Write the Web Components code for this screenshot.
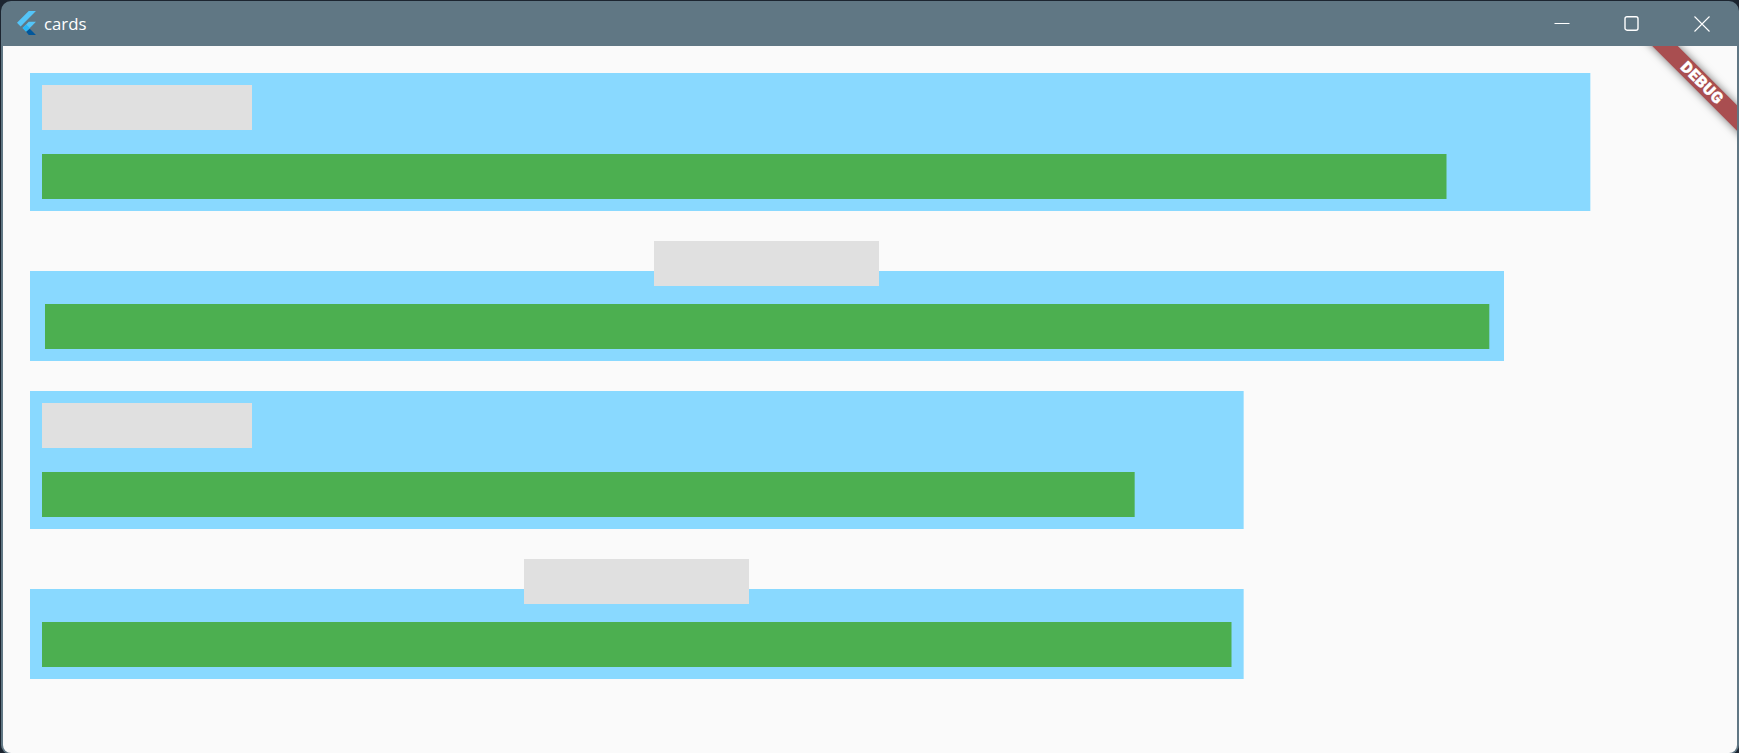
<!DOCTYPE html>
<html>
<head>
<meta charset="utf-8">
<title>cards</title>
<style>
  html, body {
    margin: 0;
    height: 100%;
    overflow: hidden;
    background: #1c2530;
  }
</style>
</head>
<body>
<app-window>
  <title-bar slot="bar">cards</title-bar>
  <card-demo style="width: 1560px" edge="rgba(137,217,255,.35)">
    <grey-chip slot="head" style="width: 210px"></grey-chip>
    <green-bar style="width: 1404px" edge="rgba(76,175,80,.5)"></green-bar>
  </card-demo>
  <card-demo overlap inset="15" style="width: 1474px">
    <grey-chip slot="head" style="width: 225px; margin-left: -1px"></grey-chip>
    <green-bar edge="rgba(76,175,80,.3)"></green-bar>
  </card-demo>
  <card-demo style="width: 1213px" edge="rgba(137,217,255,.67)">
    <grey-chip slot="head" style="width: 210px"></grey-chip>
    <green-bar style="width: 1092px" edge="rgba(76,175,80,.67)"></green-bar>
  </card-demo>
  <card-demo overlap style="width: 1213px" edge="rgba(137,217,255,.67)">
    <grey-chip slot="head" style="width: 225px"></grey-chip>
    <green-bar edge="rgba(76,175,80,.5)"></green-bar>
  </card-demo>
  <debug-banner slot="overlay"></debug-banner>
</app-window>

<script>
(() => {
  class AppWindow extends HTMLElement {
    constructor() {
      super();
      this.attachShadow({ mode: 'open' });
      this.shadowRoot.innerHTML = `
        <style>
          *, *::after, *::before {
            box-sizing: border-box;
          }

          :host {
            display: flex;
            flex-direction: column;
            height: 752px;
            margin: 1px 0 0 1px;
            padding: 0 2px 1px 2px;
            border-radius: 10px 10px 9px 9px;
            background: #607784;
            overflow: hidden;
          }

          .content {
            flex: 1;
            display: flex;
            flex-direction: column;
            align-items: flex-start;
            padding: 27px 0 0 27px;
            border-radius: 0 0 8px 8px;
            background: #fafafa;
            position: relative;
            overflow: hidden;
          }
        </style>
        <slot name="bar"></slot>
        <div class="content">
          <slot></slot>
          <slot name="overlay"></slot>
        </div>
      `;
    }
  }

  class TitleBar extends HTMLElement {
    constructor() {
      super();
      this.attachShadow({ mode: 'open' });
      this.shadowRoot.innerHTML = `
        <style>
          :host {
            display: flex;
            align-items: center;
            height: 45px;
            padding-left: 14px;
            color: #fff;
            font: 16.8px "Open Sans", sans-serif;
          }

          .logo {
            width: 19px;
            height: 24px;
            margin-right: 8px;
            margin-top: -1px;
          }

          .title {
            flex: 1;
            margin-top: -1px;
          }

          .button {
            width: 70px;
            height: 45px;
            display: flex;
            align-items: center;
            justify-content: center;
          }

          .button svg {
            display: block;
            width: 16px;
            height: 16px;
            fill: none;
            stroke: #fff;
            stroke-width: 1.1;
          }
          .button svg.max {
            stroke-width: 1.4;
          }
        </style>
        <svg class="logo" viewBox="10 10 146 185">
          <path fill="#54c5f8" d="M37.7 128.9 9.8 101 100.4 10.4h55.5z"/>
          <path fill="#54c5f8" d="M155.9 93.5h-55.5l-47.6 47.6 28 28z"/>
          <path fill="#29b6f6" d="M52.8 141.1 80.8 113.1 108.8 141.1 80.8 169.1z"/>
          <path fill="#01579b" d="M100.4 194.6h55.5l-47.6-47.6-27.5 22.1z"/>
        </svg>
        <span class="title"><slot></slot></span>
        <div class="button">
          <svg viewBox="0 0 16 16"><path d="M.5 7.5h15"/></svg>
        </div>
        <div class="button">
          <svg class="max" viewBox="0 0 16 16"><rect x="1" y=".7" width="13" height="13.5" rx="2"/></svg>
        </div>
        <div class="button">
          <svg viewBox="0 0 16 16"><path d="M.5 .5l15 15M15.5 .5l-15 15"/></svg>
        </div>
      `;
    }
  }

  class CardDemo extends HTMLElement {
    constructor() {
      super();
      this.attachShadow({ mode: 'open' });
      this.shadowRoot.innerHTML = `
        <style>
          *, *::after, *::before {
            box-sizing: border-box;
          }

          :host {
            display: block;
            margin-top: 30px;
          }
          :host(:nth-child(2)) {
            margin-top: 0;
          }
          :host([overlap]) {
            margin-top: 60px;
          }

          .box {
            display: flex;
            flex-direction: column;
            gap: 24px;
            padding: 12px;
            background: #89d9ff;
          }
          :host([overlap]) .box {
            gap: 18px;
            padding: 0 var(--inset, 12px) 12px;
          }

          ::slotted([slot="head"]) {
            align-self: flex-start;
          }
          :host([overlap]) ::slotted([slot="head"]) {
            align-self: center;
            margin-top: -30px;
          }
        </style>
        <div class="box">
          <slot name="head"></slot>
          <slot></slot>
        </div>
      `;
    }

    connectedCallback() {
      if (this.hasAttribute('inset')) {
        this.style.setProperty('--inset', `${this.getAttribute('inset')}px`);
      }
      // cards end on a fractional pixel in the original, fake the soft edge
      if (this.hasAttribute('edge')) {
        this.shadowRoot.querySelector('.box').style.boxShadow = `1px 0 0 ${this.getAttribute('edge')}`;
      }
    }
  }

  class GreyChip extends HTMLElement {
    constructor() {
      super();
      this.attachShadow({ mode: 'open' });
      this.shadowRoot.innerHTML = `
        <style>
          :host {
            display: block;
            height: 45px;
            background: #e0e0e0;
          }
        </style>
      `;
    }
  }

  class GreenBar extends HTMLElement {
    constructor() {
      super();
      this.attachShadow({ mode: 'open' });
      this.shadowRoot.innerHTML = `
        <style>
          :host {
            display: block;
            height: 45px;
            background: #4caf50;
          }
        </style>
      `;
    }

    connectedCallback() {
      if (this.hasAttribute('edge')) {
        this.style.boxShadow = `1px 0 0 ${this.getAttribute('edge')}`;
      }
    }
  }

  class DebugBanner extends HTMLElement {
    constructor() {
      super();
      this.attachShadow({ mode: 'open' });
      this.shadowRoot.innerHTML = `
        <style>
          :host {
            display: block;
            position: absolute;
            top: 0;
            right: 0;
            width: 120px;
            height: 120px;
            overflow: hidden;
            pointer-events: none;
          }

          .band {
            position: absolute;
            left: -15px;
            top: 28px;
            width: 200px;
            height: 18px;
            transform: rotate(45deg);
            background: #a94e50;
            box-shadow: 0 0 9px rgba(0, 0, 0, 0.55);
            color: #fff;
            font: 900 15.5px/18px Roboto, sans-serif;
            -webkit-text-stroke: 0.5px #fff;
            letter-spacing: 0.6px;
            text-align: center;
          }
        </style>
        <div class="band">DEBUG</div>
      `;
    }
  }

  customElements.define('app-window', AppWindow);
  customElements.define('title-bar', TitleBar);
  customElements.define('card-demo', CardDemo);
  customElements.define('grey-chip', GreyChip);
  customElements.define('green-bar', GreenBar);
  customElements.define('debug-banner', DebugBanner);
})();
</script>
</body>
</html>
